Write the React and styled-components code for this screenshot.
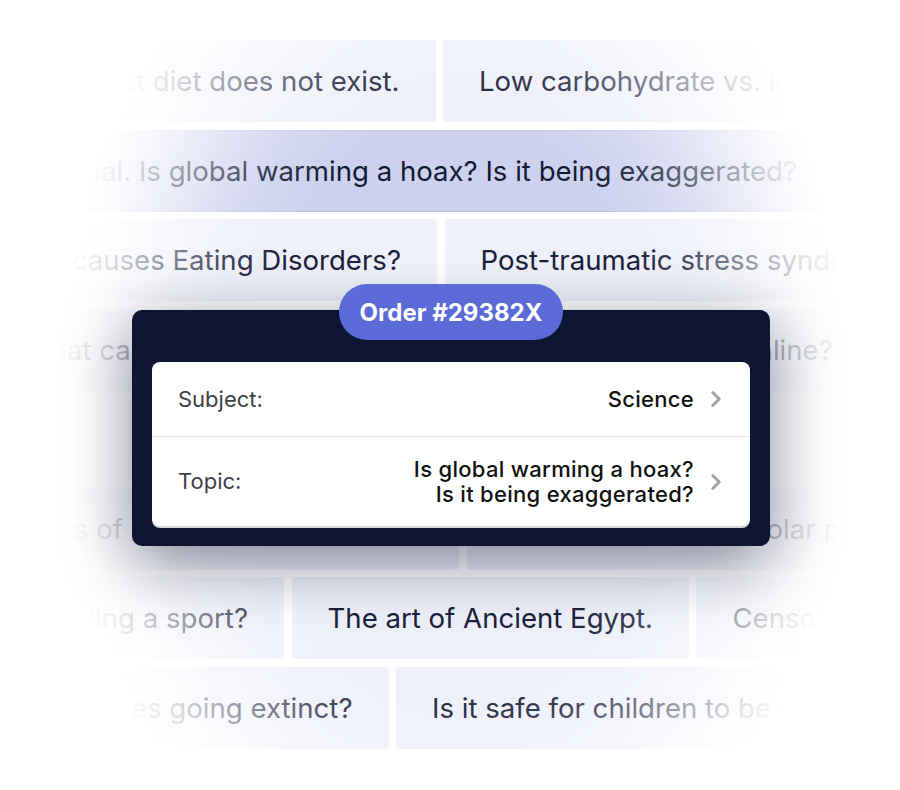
import styled, { createGlobalStyle } from "styled-components";
import { ChevronRight } from "lucide-react";

const GlobalStyle = createGlobalStyle`
  body {
    margin: 0;
    background: #fff;
    font-family: Inter, "Noto Sans", sans-serif;
  }
`;

const Page = styled.div`
  position: relative;
  width: 900px;
  height: 790px;
  overflow: hidden;
  background: #fff;
`;

const Board = styled.div`
  display: flex;
  flex-direction: column;
  gap: 7.5px;
  padding-top: 40px;
`;

const Row = styled.div`
  display: grid;
  grid-template-columns: ${(p) => p.$split}px 1fr;
  column-gap: 7.5px;
  height: 82px;
`;

const Side = styled.div`
  display: flex;
  gap: 7.5px;
  min-width: 0;
  overflow: hidden;
  justify-content: ${(p) => (p.$end ? "flex-end" : "flex-start")};
`;

const Tile = styled.div`
  flex-shrink: 0;
  height: 82px;
  box-sizing: border-box;
  padding: 0 36px;
  display: flex;
  align-items: center;
  background: #eef0fa;
  border-radius: 4px;
  font-size: 27.6px;
  color: #1b2139;
  white-space: nowrap;
`;

const FeaturedTile = styled(Tile)`
  justify-content: flex-end;
  padding-right: 103px;
  overflow: hidden;
  background: #cdd1ee;
  border-top: 1px solid #c2c7e9;
  border-bottom: 1px solid #c2c7e9;
  border-radius: 0;
  color: #141a33;
`;

const Fade = styled.div`
  position: absolute;
  inset: 0;
  pointer-events: none;
  background: radial-gradient(
    410px 580px at 455px 395px,
    rgba(255, 255, 255, 0) 48%,
    rgba(255, 255, 255, 0.15) 60%,
    rgba(255, 255, 255, 0.5) 74%,
    rgba(255, 255, 255, 0.85) 87%,
    #fff 97%
  );
`;

const Card = styled.div`
  position: absolute;
  left: 132px;
  top: 310px;
  width: 638px;
  height: 236px;
  box-sizing: border-box;
  padding: 52px 20px 20px;
  background: #0d1530;
  border-radius: 10px;
  box-shadow: 0 16px 64px rgba(15, 20, 50, 0.5);
`;

const Badge = styled.div`
  position: absolute;
  top: -26px;
  left: 50%;
  transform: translateX(-50%);
  width: 224px;
  height: 56px;
  border-radius: 28px;
  background: #5a6bd7;
  color: #fff;
  font-size: 24px;
  font-weight: 700;
  display: flex;
  align-items: center;
  justify-content: center;
`;

const Panel = styled.div`
  background: #fff;
  border-radius: 8px;
  box-shadow: 0 2px 0 #d6d8e0;
  overflow: hidden;
`;

const InfoRow = styled.div`
  display: flex;
  align-items: center;
  box-sizing: border-box;
  height: ${(p) => (p.$tall ? "90px" : "74px")};
  padding: 0 21px 0 26px;
  border-top: ${(p) => (p.$tall ? "1.5px solid #e4e4e7" : "none")};
  font-size: 22px;
  line-height: 25px;
`;

const Label = styled.span`
  color: #3f3f46;
`;

const Value = styled.span`
  margin-left: auto;
  text-align: right;
  color: #111;
  font-weight: 500;
  letter-spacing: 0.3px;
`;

const Chevron = styled(ChevronRight)`
  display: block;
  flex-shrink: 0;
  margin-left: 9px;
  color: #a3a3a8;
`;

const rows = [
  {
    split: 435.5,
    left: ["The perfect diet does not exist."],
    right: ["Low carbohydrate vs. low fat diets."],
  },
  { featured: "Homeschooling is beneficial. Is global warming a hoax? Is it being exaggerated?" },
  {
    split: 437,
    left: ["What causes Eating Disorders?"],
    right: ["Post-traumatic stress syndrome."],
  },
  {
    split: 482,
    left: ["What can we learn from history?"],
    right: ["Is it safe to date online?"],
  },
  {
    split: 470,
    left: ["Is homework useful?"],
    right: ["Gender equality."],
  },
  {
    split: 459,
    left: ["The effects of social media on youth."],
    right: ["Understanding a bipolar personality."],
  },
  {
    split: 284,
    left: ["Is cheerleading a sport?"],
    right: ["The art of Ancient Egypt.", "Censorship in the media."],
  },
  {
    split: 388.5,
    left: ["Are bees going extinct?"],
    right: ["Is it safe for children to be online?"],
  },
];

export default function App() {
  return (
    <Page>
      <GlobalStyle />
      <Board>
        {rows.map((row, i) =>
          row.featured ? (
            <FeaturedTile key={i}>{row.featured}</FeaturedTile>
          ) : (
            <Row key={i} $split={row.split}>
              <Side $end>
                {row.left.map((t) => (
                  <Tile key={t}>{t}</Tile>
                ))}
              </Side>
              <Side>
                {row.right.map((t) => (
                  <Tile key={t}>{t}</Tile>
                ))}
              </Side>
            </Row>
          )
        )}
      </Board>
      <Fade />
      <Card>
        <Badge>Order #29382X</Badge>
        <Panel>
          <InfoRow>
            <Label>Subject:</Label>
            <Value>Science</Value>
            <Chevron size={26} strokeWidth={2.8} />
          </InfoRow>
          <InfoRow $tall>
            <Label>Topic:</Label>
            <Value>
              Is global warming a hoax?
              <br />
              Is it being exaggerated?
            </Value>
            <Chevron size={26} strokeWidth={2.8} />
          </InfoRow>
        </Panel>
      </Card>
    </Page>
  );
}
